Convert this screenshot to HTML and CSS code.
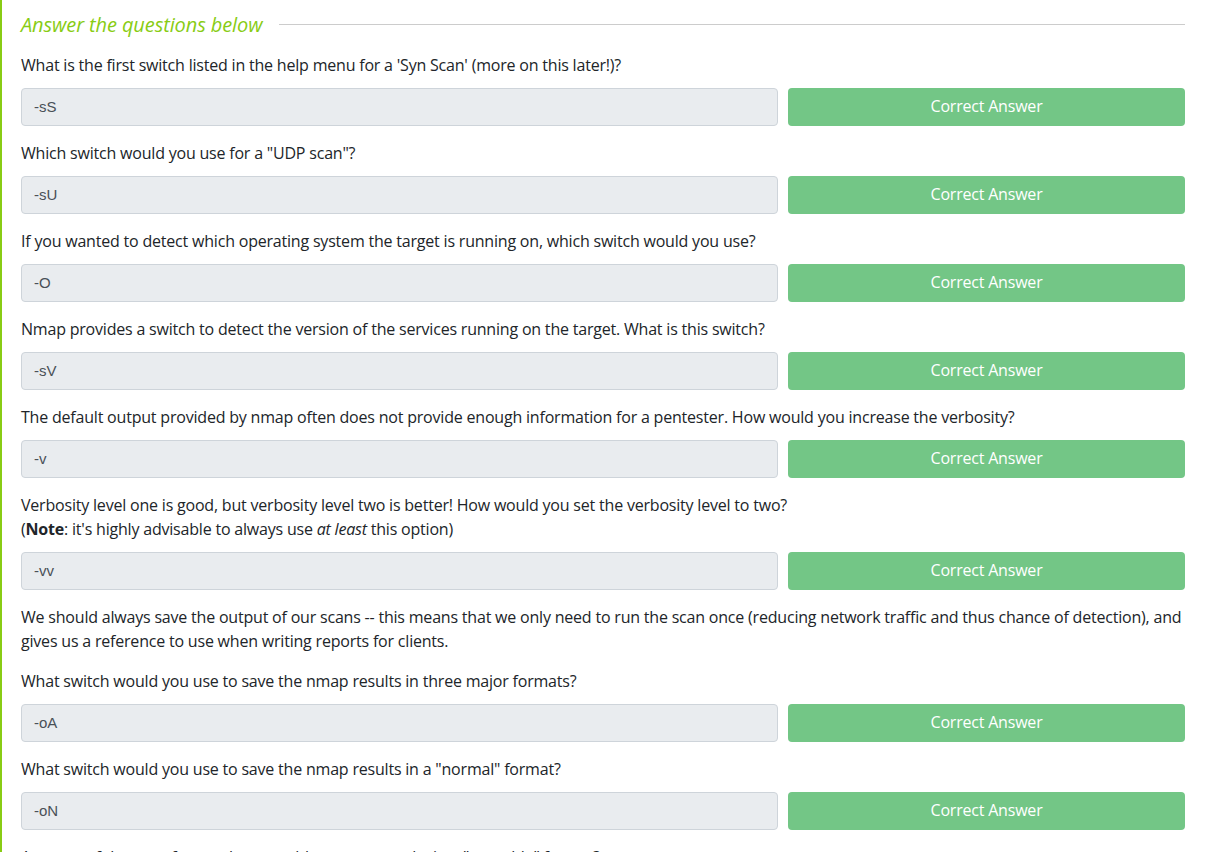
FILE: index.html
```html
<!DOCTYPE html>
<html><head><meta charset="utf-8"><link rel="stylesheet" href="styles.css"></head>
<body>
<div class="panel">
  <div class="heading"><span class="heading-text">Answer the questions below</span></div>

  <div class="group">
    <p class="q">What is the first switch listed in the help menu for a 'Syn Scan' (more on this later!)?</p>
    <div class="row"><div class="answer">-sS</div><button class="btn">Correct Answer</button></div>
  </div>

  <div class="group">
    <p class="q">Which switch would you use for a "UDP scan"?</p>
    <div class="row"><div class="answer">-sU</div><button class="btn">Correct Answer</button></div>
  </div>

  <div class="group">
    <p class="q">If you wanted to detect which operating system the target is running on, which switch would you use?</p>
    <div class="row"><div class="answer">-O</div><button class="btn">Correct Answer</button></div>
  </div>

  <div class="group">
    <p class="q">Nmap provides a switch to detect the version of the services running on the target. What is this switch?</p>
    <div class="row"><div class="answer">-sV</div><button class="btn">Correct Answer</button></div>
  </div>

  <div class="group">
    <p class="q">The default output provided by nmap often does not provide enough information for a pentester. How would you increase the verbosity?</p>
    <div class="row"><div class="answer">-v</div><button class="btn">Correct Answer</button></div>
  </div>

  <div class="group">
    <p class="q">Verbosity level one is good, but verbosity level two is better! How would you set the verbosity level to two?<br>(<strong>Note</strong>: it's highly advisable to always use <em>at least</em> this option)</p>
    <div class="row"><div class="answer">-vv</div><button class="btn">Correct Answer</button></div>
  </div>

  <div class="group">
    <p class="intro">We should always save the output of our scans -- this means that we only need to run the scan once (reducing network traffic and thus chance of detection), and gives us a reference to use when writing reports for clients.</p>
    <p class="q">What switch would you use to save the nmap results in three major formats?</p>
    <div class="row"><div class="answer">-oA</div><button class="btn">Correct Answer</button></div>
  </div>

  <div class="group">
    <p class="q">What switch would you use to save the nmap results in a "normal" format?</p>
    <div class="row"><div class="answer">-oN</div><button class="btn">Correct Answer</button></div>
  </div>

  <div class="group">
    <p class="q">A very useful output format: how would you save results in a "grepable" format?</p>
    <div class="row"><div class="answer">-oG</div><button class="btn">Correct Answer</button></div>
  </div>
</div>
</body></html>
```
FILE: styles.css
```css
html,body{margin:0;padding:0;background:#fff}
body{font-family:"Open Sans","Noto Sans",sans-serif;color:#212529;overflow:hidden}
.panel{border-left:2px solid #88cc14;padding:10px 20px 40px 19px;min-height:900px}
.heading{display:flex;align-items:center;height:28px;margin-bottom:15px}
.heading-text{font-style:italic;font-size:20px;color:#88cc14;letter-spacing:-0.1px;white-space:nowrap}
.heading::after{content:"";flex:1;height:1px;background:#cccccc;margin-left:17px;margin-top:1px}
.group{margin-bottom:15px}
.q,.intro{margin:0;font-size:16px;line-height:24px;letter-spacing:-0.2px}
.q{margin-bottom:11px}
.intro{margin-bottom:16px}
.q strong{font-weight:700}
.row{display:grid;grid-template-columns:1fr 397px;gap:10px}
.answer{height:38px;box-sizing:border-box;background:#e9ecef;border:1px solid #ced4da;border-radius:4px;padding:0 12px 1px;display:flex;align-items:center;font-family:"Liberation Sans",Arial,sans-serif;font-size:15px;color:#495057}
.btn{height:38px;border:0;border-radius:4px;background:#73c686;color:#fff;font-family:"Open Sans","Noto Sans",sans-serif;font-size:16px;letter-spacing:-0.2px;padding:0 0 2px;cursor:pointer}
```
